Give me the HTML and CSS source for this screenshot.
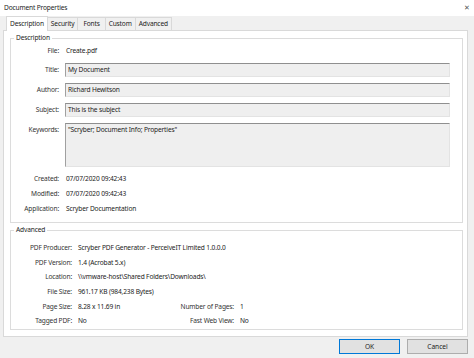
FILE: index.html
```html
<!DOCTYPE html>
<html lang="en">
<head>
<meta charset="UTF-8" />
<title>Document Properties</title>
<link rel="stylesheet" href="styles.css">
</head>
<body>
<div class="titlebar">
<span class="title">Document Properties</span>
<span class="close">&#x2715;</span>
</div>

<div class="tabs">
<div class="tab active">Description</div>
<div class="tab">Security</div>
<div class="tab">Fonts</div>
<div class="tab">Custom</div>
<div class="tab">Advanced</div>
</div>

<div class="panel">
<fieldset class="group desc">
<legend>Description</legend>
<div class="row r-file"><span class="lbl">File:</span><span class="val">Create.pdf</span></div>
<div class="row r-field"><span class="lbl">Title:</span><div class="field">My Document</div></div>
<div class="row r-field"><span class="lbl">Author:</span><div class="field">Richard Hewitson</div></div>
<div class="row r-field"><span class="lbl">Subject:</span><div class="field">This is the subject</div></div>
<div class="row r-area"><span class="lbl">Keywords:</span><div class="field area">"Scryber; Document Info; Properties"</div></div>
<div class="row r-info first"><span class="lbl">Created:</span><span class="val">07/07/2020 09:42:43</span></div>
<div class="row r-info"><span class="lbl">Modified:</span><span class="val">07/07/2020 09:42:43</span></div>
<div class="row r-info"><span class="lbl">Application:</span><span class="val">Scryber Documentation</span></div>
</fieldset>

<fieldset class="group adv">
<legend>Advanced</legend>
<div class="grid">
<span class="lbl">PDF Producer:</span><span class="val wide">Scryber PDF Generator - PerceiveIT Limited 1.0.0.0</span>
<span class="lbl">PDF Version:</span><span class="val wide">1.4 (Acrobat 5.x)</span>
<span class="lbl">Location:</span><span class="val wide">\\vmware-host\Shared Folders\Downloads\</span>
<span class="lbl">File Size:</span><span class="val wide">961.17 KB (984,238 Bytes)</span>
<span class="lbl">Page Size:</span><span class="val">8.28 x 11.69 in</span>
<span class="lbl">Number of Pages:</span><span class="val">1</span>
<span class="lbl">Tagged PDF:</span><span class="val">No</span>
<span class="lbl">Fast Web View:</span><span class="val">No</span>
</div>
</fieldset>
</div>

<div class="buttons">
<button class="btn ok">OK</button>
<button class="btn">Cancel</button>
</div>
</body>
</html>
```

FILE: styles.css
```css
body {
margin: 0;
width: 474px;
height: 358px;
background: #f0f0f0;
font-family: "Noto Sans", "Liberation Sans", sans-serif;
font-size: 6.6px;
letter-spacing: -0.15px;
line-height: 12px;
color: #222;
overflow: hidden;
}

.titlebar {
height: 16px;
background: #fff;
display: flex;
justify-content: space-between;
align-items: center;
padding: 0 4px;
}

.close {
font-size: 7px;
color: #555;
}

/* tab strip */
.tabs {
display: flex;
align-items: flex-end;
height: 14px;
padding-left: 7px;
}

.tab {
height: 12px;
padding: 0 3px;
border: 1px solid #d9d9d9;
border-bottom: none;
margin-left: -1px;
line-height: 12px;
}

.tab.active {
background: #fff;
height: 14px;
line-height: 14px;
position: relative;
z-index: 1;
margin-bottom: -1px;
}

.tabs .tab:nth-child(3) {
padding: 0 5px;
}

.panel {
margin: 0 6px 0 3px;
height: 307px;
background: #fff;
border: 1px solid #d9d9d9;
box-sizing: border-box;
padding: 2px 4px 0 6px;
}

.group {
border: 1px solid #dcdcdc;
margin: 0;
padding: 0 12px 0 0;
min-width: 0;
}

.group legend {
padding: 0 2px;
margin-left: 3px;
line-height: 10px;
}

.lbl {
text-align: right;
color: #333;
}

.row {
display: flex;
align-items: center;
}

.row .lbl {
width: 48px;
flex: none;
margin-right: 6px;
}

.row .val {
padding-left: 1px;
}

.r-file {
height: 12px;
margin-top: 2px;
}

.r-field {
height: 14px;
margin-top: 6px;
}

.field {
flex: 1;
height: 14px;
box-sizing: border-box;
background: #efefef;
border: 1px solid #e3e3e3;
border-top-color: #8f8f8f;
border-left-color: #a0a0a0;
padding-left: 2px;
line-height: 12px;
}

.r-area {
align-items: flex-start;
height: 44px;
margin-top: 6px;
}

.r-area .lbl {
line-height: 14px;
}

.field.area {
height: 44px;
}

.r-info {
height: 15px;
}

.r-info.first {
margin-top: 4px;
}

.desc {
height: 190px;
box-sizing: border-box;
}

.adv {
margin-top: 2px;
height: 105px;
box-sizing: border-box;
}

.grid {
display: grid;
grid-template-columns: 61px 90px 60px 1fr;
grid-auto-rows: 14.6px;
column-gap: 6px;
align-items: center;
margin-top: 6px;
}

.grid .wide {
grid-column: 2 / 5;
}

.buttons {
display: flex;
justify-content: flex-end;
gap: 7px;
padding: 2px 6px 0 0;
}

.btn {
width: 61px;
height: 15px;
padding: 0;
font: inherit;
color: #222;
background: #e1e1e1;
border: 1px solid #adadad;
}

.btn.ok {
border-color: #0078d7;
}
```
